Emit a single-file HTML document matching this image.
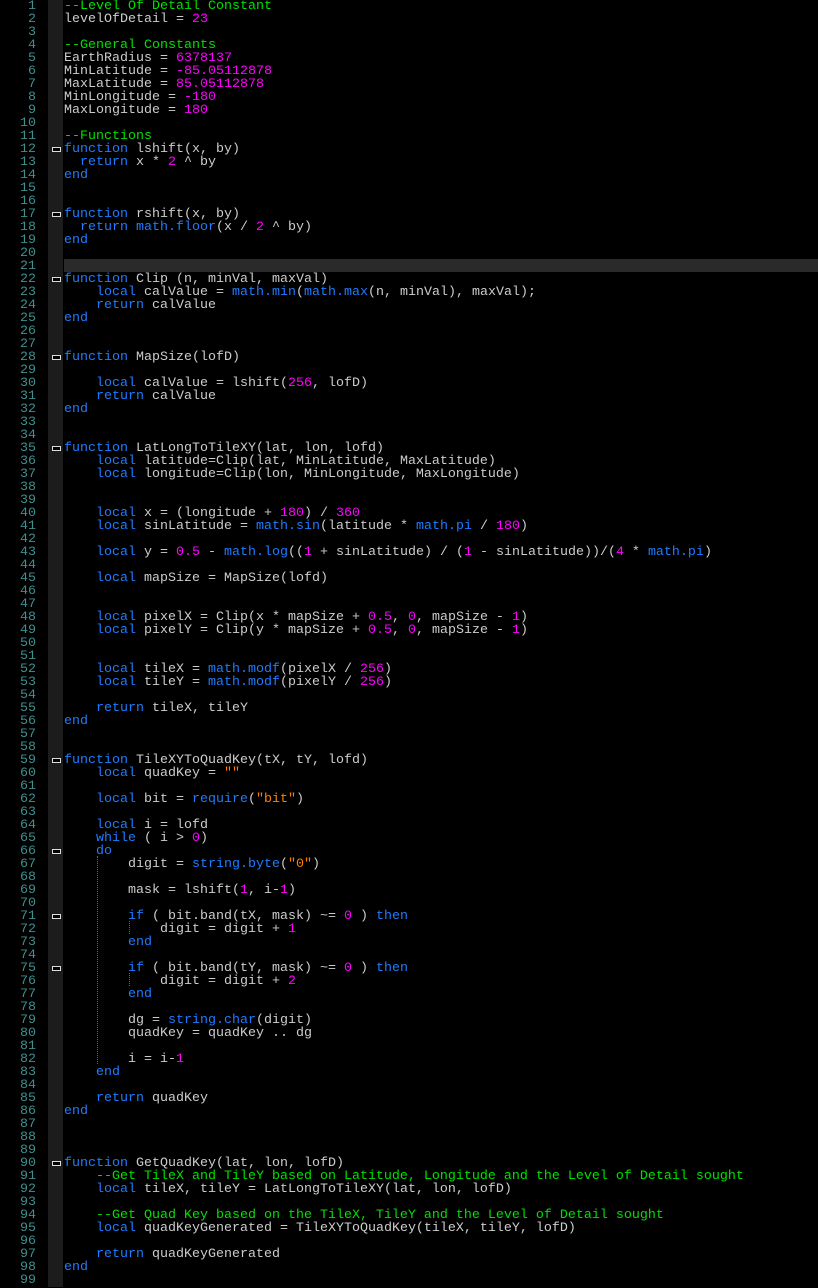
<!DOCTYPE html>
<html><head><meta charset="utf-8"><style>
body{margin:0;background:#000;width:818px;height:1287px;overflow:hidden;font-family:"Liberation Mono",monospace;font-size:13.33px;}
#g{position:absolute;left:0;top:0;width:36px;color:#3f8f8f;text-align:right;line-height:13px;white-space:pre}
#m{position:absolute;left:48px;top:0;width:15px;height:1287px;background:#1c1c1c}
#c{position:absolute;left:64px;top:0;color:#cccccc;line-height:13px;white-space:pre}
#hl{position:absolute;left:64px;right:0;top:259px;height:13px;background:#2a2a2a}
.k{color:#1e7cff}.n{color:#ff00ff}.c{color:#00e000}.s{color:#ff8000}
.f{position:absolute;left:52px;width:7px;height:3px;border:1px solid #ddd;background:#000}
.ig{position:absolute;width:0;border-left:1px dotted #666}
</style></head><body>
<div id="m"></div><div id="hl"></div>
<div class="ig" style="left:97px;top:856px;height:208px"></div>
<div class="ig" style="left:129px;top:921px;height:13px"></div>
<div class="ig" style="left:129px;top:973px;height:13px"></div>
<div id="g">1
2
3
4
5
6
7
8
9
10
11
12
13
14
15
16
17
18
19
20
21
22
23
24
25
26
27
28
29
30
31
32
33
34
35
36
37
38
39
40
41
42
43
44
45
46
47
48
49
50
51
52
53
54
55
56
57
58
59
60
61
62
63
64
65
66
67
68
69
70
71
72
73
74
75
76
77
78
79
80
81
82
83
84
85
86
87
88
89
90
91
92
93
94
95
96
97
98
99</div>
<div class="f" style="top:147px"></div>
<div class="f" style="top:212px"></div>
<div class="f" style="top:277px"></div>
<div class="f" style="top:355px"></div>
<div class="f" style="top:446px"></div>
<div class="f" style="top:758px"></div>
<div class="f" style="top:849px"></div>
<div class="f" style="top:914px"></div>
<div class="f" style="top:966px"></div>
<div class="f" style="top:1161px"></div>
<div id="c"><span class="c">--Level Of Detail Constant</span>
levelOfDetail = <span class="n">23</span>

<span class="c">--General Constants</span>
EarthRadius = <span class="n">6378137</span>
MinLatitude = <span class="n">-85.05112878</span>
MaxLatitude = <span class="n">85.05112878</span>
MinLongitude = <span class="n">-180</span>
MaxLongitude = <span class="n">180</span>

<span class="c">--Functions</span>
<span class="k">function</span> lshift(x, by)
  <span class="k">return</span> x * <span class="n">2</span> ^ by
<span class="k">end</span>


<span class="k">function</span> rshift(x, by)
  <span class="k">return</span> <span class="k">math.floor</span>(x / <span class="n">2</span> ^ by)
<span class="k">end</span>


<span class="k">function</span> Clip (n, minVal, maxVal)
    <span class="k">local</span> calValue = <span class="k">math.min</span>(<span class="k">math.max</span>(n, minVal), maxVal);
    <span class="k">return</span> calValue
<span class="k">end</span>


<span class="k">function</span> MapSize(lofD)

    <span class="k">local</span> calValue = lshift(<span class="n">256</span>, lofD)
    <span class="k">return</span> calValue
<span class="k">end</span>


<span class="k">function</span> LatLongToTileXY(lat, lon, lofd)
    <span class="k">local</span> latitude=Clip(lat, MinLatitude, MaxLatitude)
    <span class="k">local</span> longitude=Clip(lon, MinLongitude, MaxLongitude)


    <span class="k">local</span> x = (longitude + <span class="n">180</span>) / <span class="n">360</span>
    <span class="k">local</span> sinLatitude = <span class="k">math.sin</span>(latitude * <span class="k">math.pi</span> / <span class="n">180</span>)

    <span class="k">local</span> y = <span class="n">0.5</span> - <span class="k">math.log</span>((<span class="n">1</span> + sinLatitude) / (<span class="n">1</span> - sinLatitude))/(<span class="n">4</span> * <span class="k">math.pi</span>)

    <span class="k">local</span> mapSize = MapSize(lofd)


    <span class="k">local</span> pixelX = Clip(x * mapSize + <span class="n">0.5</span>, <span class="n">0</span>, mapSize - <span class="n">1</span>)
    <span class="k">local</span> pixelY = Clip(y * mapSize + <span class="n">0.5</span>, <span class="n">0</span>, mapSize - <span class="n">1</span>)


    <span class="k">local</span> tileX = <span class="k">math.modf</span>(pixelX / <span class="n">256</span>)
    <span class="k">local</span> tileY = <span class="k">math.modf</span>(pixelY / <span class="n">256</span>)

    <span class="k">return</span> tileX, tileY
<span class="k">end</span>


<span class="k">function</span> TileXYToQuadKey(tX, tY, lofd)
    <span class="k">local</span> quadKey = <span class="s">""</span>

    <span class="k">local</span> bit = <span class="k">require</span>(<span class="s">"bit"</span>)

    <span class="k">local</span> i = lofd
    <span class="k">while</span> ( i &gt; <span class="n">0</span>)
    <span class="k">do</span>
        digit = <span class="k">string.byte</span>(<span class="s">"0"</span>)

        mask = lshift(<span class="n">1</span>, i-<span class="n">1</span>)

        <span class="k">if</span> ( bit.band(tX, mask) ~= <span class="n">0</span> ) <span class="k">then</span>
            digit = digit + <span class="n">1</span>
        <span class="k">end</span>

        <span class="k">if</span> ( bit.band(tY, mask) ~= <span class="n">0</span> ) <span class="k">then</span>
            digit = digit + <span class="n">2</span>
        <span class="k">end</span>

        dg = <span class="k">string.char</span>(digit)
        quadKey = quadKey .. dg

        i = i-<span class="n">1</span>
    <span class="k">end</span>

    <span class="k">return</span> quadKey
<span class="k">end</span>



<span class="k">function</span> GetQuadKey(lat, lon, lofD)
    <span class="c">--Get TileX and TileY based on Latitude, Longitude and the Level of Detail sought</span>
    <span class="k">local</span> tileX, tileY = LatLongToTileXY(lat, lon, lofD)

    <span class="c">--Get Quad Key based on the TileX, TileY and the Level of Detail sought</span>
    <span class="k">local</span> quadKeyGenerated = TileXYToQuadKey(tileX, tileY, lofD)

    <span class="k">return</span> quadKeyGenerated
<span class="k">end</span>
</div>
</body></html>
